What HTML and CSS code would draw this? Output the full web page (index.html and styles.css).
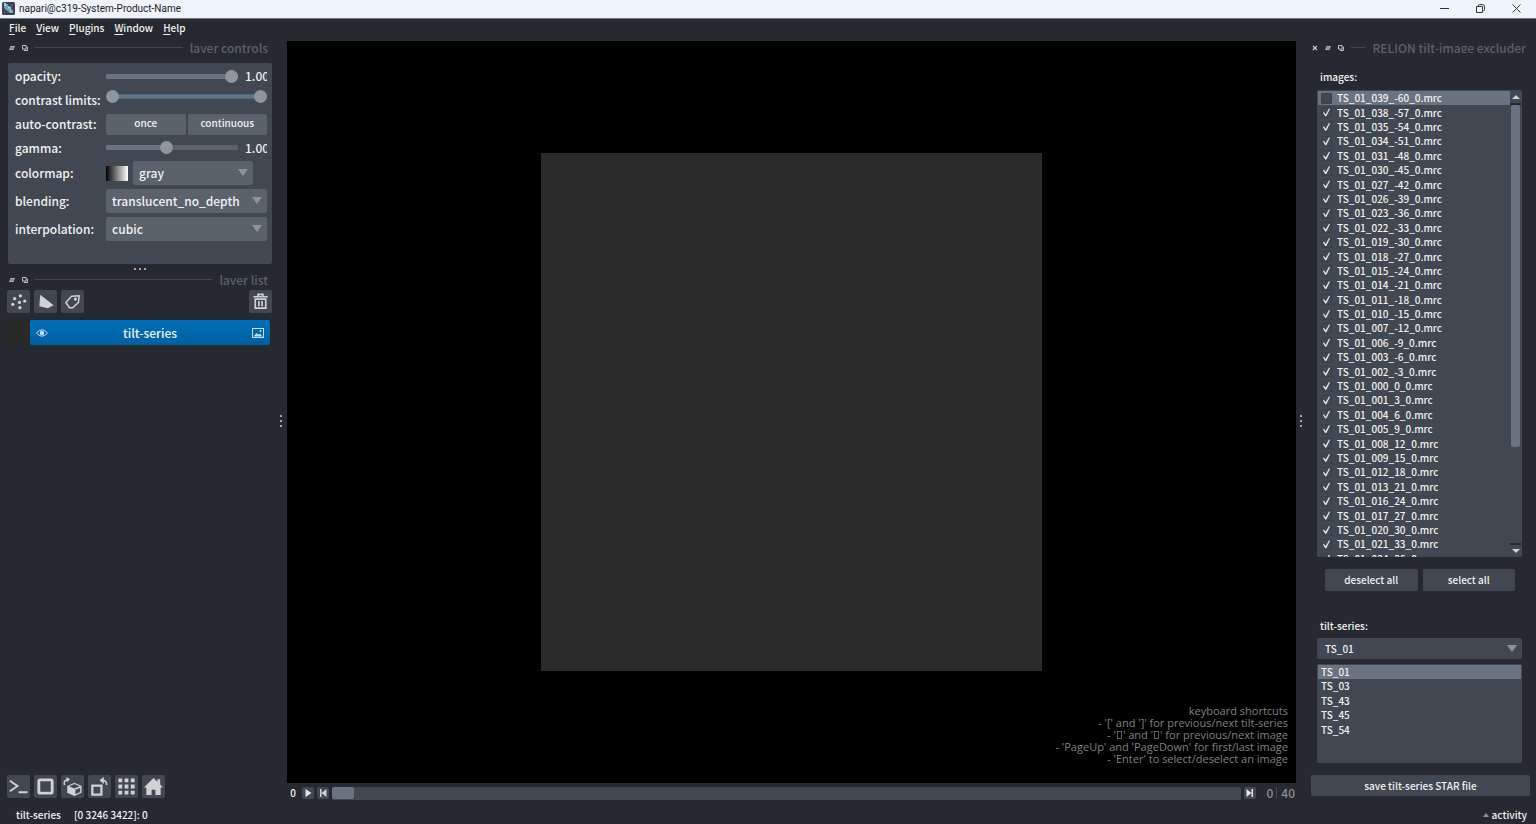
FILE: index.html
```html
<!DOCTYPE html>
<html lang="en">
<head>
<meta charset="utf-8">
<title>napari@c319-System-Product-Name</title>
<link rel="stylesheet" href="styles.css">
</head>
<body>
<svg class="defs" width="0" height="0" aria-hidden="true">
  <symbol id="hide" viewBox="0 0 6 6"><path d="M1.600 1H6L4.400 5H0z" fill="#a9acb0"/><path d="M2 3h2" stroke="#555" stroke-width="1"/></symbol>
  <symbol id="float" viewBox="0 0 6 6"><path d="M.5.5h3.600v3.600H.5z M4.800 2.100h.8v3.400H2.200v-.8" fill="none" stroke="#c3c5c8" stroke-width="1"/></symbol>
  <symbol id="close" viewBox="0 0 6 6"><path d="M.8.8l4.200 4.200M5 .8L.8 5" stroke="#d3d5d8" stroke-width="1.100"/></symbol>
</svg>
<header class="titlebar">
  <svg class="logo" viewBox="0 0 13 13"><rect width="13" height="13" rx="1.500" fill="#3f3f57"/><path d="M2 2h4v4l3 1 2 2v2H8L4 8 2 6z" fill="#6fa5ab"/><path d="M2 1h2v3H2zM6 4l3 1v3L6 6z" fill="#9fd6ce"/><path d="M7 2h4v4L8 4zM2 8l3 3H2z" fill="#54496c"/><circle cx="9" cy="9" r="1.500" fill="#8ab9c4"/></svg>
  <h1>napari@c319-System-Product-Name</h1>
  <button class="win" aria-label="Minimize"><svg width="9" height="9"><path d="M0 4.500h9" stroke="#333"/></svg></button>
  <button class="win" aria-label="Restore"><svg width="9" height="9"><path d="M.5 2.500h6v6h-6zM2.500 2V1.200Q2.500.5 3.500.5h3Q8.500.5 8.500 2.500v3Q8.500 6.500 7.500 6.500H7" fill="none" stroke="#333"/></svg></button>
  <button class="win" aria-label="Close"><svg width="9" height="9"><path d="M.5.5l8 8M8.500.5l-8 8" stroke="#333"/></svg></button>
</header>
<nav class="menu">
  <a href="#file"><u>F</u>ile</a><a href="#view"><u>V</u>iew</a><a href="#plugins"><u>P</u>lugins</a><a href="#window"><u>W</u>indow</a><a href="#help"><u>H</u>elp</a>
</nav>
<div class="workspace">
  <aside class="left">
    <div class="dock"><button aria-label="Hide"><svg><use href="#hide"/></svg></button><button aria-label="Float"><svg><use href="#float"/></svg></button><i></i><h2>layer controls</h2></div>
    <section class="controls">
      <label for="opacity">opacity:</label>
      <div class="field"><input class="slider full" id="opacity" type="range" min="0" max="100" value="100"><output>1.00</output></div>
      <label for="limits">contrast limits:</label>
      <div class="field double"><input class="slider" id="limits" type="range" value="0"><input class="slider" type="range" value="100" aria-label="upper contrast limit"></div>
      <span>auto-contrast:</span>
      <div class="field auto"><button>once</button><button>continuous</button></div>
      <label for="gamma">gamma:</label>
      <div class="field"><input class="slider mid" id="gamma" type="range" min="0" max="100" value="45"><output>1.00</output></div>
      <label for="cmap">colormap:</label>
      <div class="field"><span class="ramp"></span><span class="select narrow"><select id="cmap"><option>gray</option></select></span></div>
      <label for="blend">blending:</label>
      <div class="field"><span class="select"><select id="blend"><option>translucent_no_depth</option></select></span></div>
      <label for="interp">interpolation:</label>
      <div class="field"><span class="select"><select id="interp"><option>cubic</option></select></span></div>
    </section>
    <div class="grip across"><b></b><b></b><b></b></div>
    <div class="dock"><button aria-label="Hide"><svg><use href="#hide"/></svg></button><button aria-label="Float"><svg><use href="#float"/></svg></button><i></i><h2>layer list</h2></div>
    <div class="tools">
      <button aria-label="New points layer"><svg viewBox="0 0 22 22" fill="#d1d2d4"><circle cx="13" cy="5" r="1.700"/><circle cx="7" cy="8" r="1.700"/><circle cx="17.500" cy="10.500" r="1.700"/><circle cx="12" cy="12" r="1.700"/><circle cx="5" cy="14" r="1.700"/><circle cx="12.500" cy="17.500" r="1.700"/></svg></button>
      <button aria-label="New shapes layer"><svg viewBox="0 0 22 22" fill="#d1d2d4"><path d="M5.500 4l14 11-6 3L4.500 16z"/></svg></button>
      <button aria-label="New labels layer"><svg viewBox="0 0 22 22" fill="none" stroke="#d1d2d4" stroke-width="1.600"><path d="M4 12l6-6.500 8-.5-.8 7-6 5.500H8z" stroke-linejoin="round"/><circle cx="14" cy="8.500" r=".8" fill="#d1d2d4"/></svg></button>
      <button class="trash" aria-label="Delete layer"><svg viewBox="0 0 22 22" fill="none" stroke="#d1d2d4" stroke-width="1.700"><path d="M3.500 6h15M8.500 5.500V3.500h5v2M5.500 8.500h11v9.500h-11zM9.300 10.500v5.500M12.700 10.500v5.500"/></svg></button>
    </div>
    <div class="layer"><span class="thumb"></span>
      <div class="layername"><svg width="12" height="10" viewBox="0 0 12 10"><path d="M.5 5Q6-1.500 11.500 5 6 11.500.5 5z" fill="none" stroke="#c5dced"/><circle cx="6" cy="5" r="2.300" fill="#c5dced"/></svg><span>tilt-series</span><svg width="12" height="10" viewBox="0 0 12 10"><rect x=".5" y=".5" width="11" height="9" fill="none" stroke="#c5dced"/><path d="M1.500 8.500l3-3.500 2 1.500 1.500-1 2.500 3z" fill="#c5dced"/><circle cx="8.500" cy="3" r="1" fill="#c5dced"/></svg></div>
    </div>
    <div class="tools viewer">
      <button aria-label="Console"><svg viewBox="0 0 22 22" fill="none" stroke="#d1d2d4" stroke-width="2"><path d="M2 5l8 5.500L2 16M11 17h9.500"/></svg></button>
      <button aria-label="2D view"><svg viewBox="0 0 22 22" fill="none" stroke="#d1d2d4" stroke-width="3"><rect x="4" y="4" width="14" height="14" rx="1.500"/></svg></button>
      <button aria-label="Roll dimensions"><svg viewBox="0 0 22 22"><path d="M5.500 10.500l7.500-3.500 7.500 3.500v7L13 21l-7.500-3.500z" fill="#d1d2d4"/><path d="M7.500 10.800l5.500 2.200 5.500-2.200L13 8.500z" fill="#414851"/><path d="M14 14.500l5-2v4.300l-5 2.200z" fill="#414851"/><path d="M2.500 9.500Q1.500 4.500 5.500 3.800" fill="none" stroke="#d1d2d4" stroke-width="1.600"/><path d="M4.500 1l4 2.500-3.500 3z" fill="#d1d2d4"/></svg></button>
      <button aria-label="Transpose"><svg viewBox="0 0 22 22" fill="none" stroke="#d1d2d4" stroke-width="2.400"><path d="M3.500 10h9.500v9.500H3.500z"/><path d="M14 4.500q4.500 0 4.500 5" stroke-width="1.700"/><path d="M15.500 1v7.500L11 4.500z" fill="#d1d2d4" stroke="none"/></svg></button>
      <button aria-label="Grid mode"><svg viewBox="0 0 22 22" fill="#d1d2d4"><path d="M2.500 2.500h4v4h-4zM9 2.500h4v4H9zM15.500 2.500h4v4h-4zM2.500 9h4v4h-4zM9 9h4v4H9zM15.500 9h4v4h-4zM2.500 15.500h4v4h-4zM9 15.500h4v4H9zM15.500 15.500h4v4h-4z"/></svg></button>
      <button aria-label="Home"><svg viewBox="0 0 22 22" fill="#d1d2d4"><path d="M11 2l4 4V3.500h3V9l3 3h-2.500v8H13v-5.500H9V20H3.500v-8H1z"/></svg></button>
    </div>
  </aside>
  <div class="grip down"><b></b><b></b><b></b></div>
  <main>
    <div class="canvas"><div class="image"></div>
      <p class="shortcuts">keyboard shortcuts<br>- '[' and ']' for previous/next tilt-series<br>- '<span class="key"></span>' and '<span class="key"></span>' for previous/next image<br>- 'PageUp' and 'PageDown' for first/last image<br>- 'Enter' to select/deselect an image</p>
    </div>
    <div class="dims"><span class="axis">0</span><button aria-label="Play"><svg viewBox="0 0 12 12"><path d="M3.500 2l6 4-6 4z" fill="#e4e5e7"/></svg></button><button aria-label="First"><svg viewBox="0 0 12 12"><path d="M3 2v8h1.500V2zM9.500 2v8L4.500 6z" fill="#d1d2d4"/></svg></button><input type="range" min="0" max="40" value="0" aria-label="Tilt image index"><button aria-label="Last"><svg viewBox="0 0 12 12"><path d="M9 2v8H7.500V2zM2.500 2v8l5-4z" fill="#e4e5e7"/></svg></button><span class="pos">0</span><span class="total">40</span></div>
  </main>
  <div class="grip down end"><b></b><b></b><b></b></div>
  <aside class="right">
    <div class="dock"><button aria-label="Close"><svg><use href="#close"/></svg></button><button aria-label="Hide"><svg><use href="#hide"/></svg></button><button aria-label="Float"><svg><use href="#float"/></svg></button><i></i><h2>RELION tilt-image excluder</h2></div>
    <h3>images:</h3>
    <div class="files">
      <ul>
        <li class="on"><label><input type="checkbox">TS_01_039_-60_0.mrc</label></li>
        <li><label><input type="checkbox" checked>TS_01_038_-57_0.mrc</label></li>
        <li><label><input type="checkbox" checked>TS_01_035_-54_0.mrc</label></li>
        <li><label><input type="checkbox" checked>TS_01_034_-51_0.mrc</label></li>
        <li><label><input type="checkbox" checked>TS_01_031_-48_0.mrc</label></li>
        <li><label><input type="checkbox" checked>TS_01_030_-45_0.mrc</label></li>
        <li><label><input type="checkbox" checked>TS_01_027_-42_0.mrc</label></li>
        <li><label><input type="checkbox" checked>TS_01_026_-39_0.mrc</label></li>
        <li><label><input type="checkbox" checked>TS_01_023_-36_0.mrc</label></li>
        <li><label><input type="checkbox" checked>TS_01_022_-33_0.mrc</label></li>
        <li><label><input type="checkbox" checked>TS_01_019_-30_0.mrc</label></li>
        <li><label><input type="checkbox" checked>TS_01_018_-27_0.mrc</label></li>
        <li><label><input type="checkbox" checked>TS_01_015_-24_0.mrc</label></li>
        <li><label><input type="checkbox" checked>TS_01_014_-21_0.mrc</label></li>
        <li><label><input type="checkbox" checked>TS_01_011_-18_0.mrc</label></li>
        <li><label><input type="checkbox" checked>TS_01_010_-15_0.mrc</label></li>
        <li><label><input type="checkbox" checked>TS_01_007_-12_0.mrc</label></li>
        <li><label><input type="checkbox" checked>TS_01_006_-9_0.mrc</label></li>
        <li><label><input type="checkbox" checked>TS_01_003_-6_0.mrc</label></li>
        <li><label><input type="checkbox" checked>TS_01_002_-3_0.mrc</label></li>
        <li><label><input type="checkbox" checked>TS_01_000_0_0.mrc</label></li>
        <li><label><input type="checkbox" checked>TS_01_001_3_0.mrc</label></li>
        <li><label><input type="checkbox" checked>TS_01_004_6_0.mrc</label></li>
        <li><label><input type="checkbox" checked>TS_01_005_9_0.mrc</label></li>
        <li><label><input type="checkbox" checked>TS_01_008_12_0.mrc</label></li>
        <li><label><input type="checkbox" checked>TS_01_009_15_0.mrc</label></li>
        <li><label><input type="checkbox" checked>TS_01_012_18_0.mrc</label></li>
        <li><label><input type="checkbox" checked>TS_01_013_21_0.mrc</label></li>
        <li><label><input type="checkbox" checked>TS_01_016_24_0.mrc</label></li>
        <li><label><input type="checkbox" checked>TS_01_017_27_0.mrc</label></li>
        <li><label><input type="checkbox" checked>TS_01_020_30_0.mrc</label></li>
        <li><label><input type="checkbox" checked>TS_01_021_33_0.mrc</label></li>
        <li><label><input type="checkbox" checked>TS_01_024_36_0.mrc</label></li>
      </ul>
      <div class="scroll"><button class="up" aria-label="Scroll up"></button><div class="rail"><div class="thumbbar"></div></div><button class="dn" aria-label="Scroll down"></button></div>
    </div>
    <div class="pair"><button>deselect all</button><button>select all</button></div>
    <h3><label for="series">tilt-series:</label></h3>
    <span class="select series"><select id="series"><option>TS_01</option></select></span>
    <ul class="serieslist"><li class="on">TS_01</li><li>TS_03</li><li>TS_43</li><li>TS_45</li><li>TS_54</li></ul>
    <button class="save">save tilt-series STAR file</button>
  </aside>
</div>
<footer><span>tilt-series</span><span>[0 3246 3422]: 0</span><button class="activity"><svg width="6" height="4"><path d="M0 4l3-4 3 4z" fill="#8d9196"/></svg>activity</button></footer>
</body>
</html>
```
FILE: styles.css
```css
* { box-sizing: border-box; }
body {
  margin: 0; height: 100vh; display: flex; flex-direction: column; overflow: hidden;
  background: #262930; color: #f0f1f2;
  font: 500 10px/14px "Noto Sans CJK SC", "Noto Sans", sans-serif;
}
.defs { position: absolute; }
button, select, input { font: inherit; color: inherit; margin: 0; border: 0; padding: 0; border-radius: 2px; }
button { background: #414851; display: flex; align-items: center; justify-content: center; }
h1, h2, h3, p, ul { margin: 0; padding: 0; font-size: inherit; font-weight: inherit; }
ul { list-style: none; }

.titlebar { display: flex; align-items: center; height: 19px; padding: 0 2px 2px; background: #eff4fa; border-bottom: 1px solid #777b84; color: #222; }
.titlebar h1 { flex: 1; font: 10px/14px Roboto, sans-serif; padding: 2px 0 0 4px; }
.logo { width: 13px; height: 13px; }
.win { width: 36px; height: 16px; background: none; }

.menu { display: flex; align-items: center; gap: 10px; height: 22px; padding: 0 9px 4px; }
.menu a { color: inherit; text-decoration: none; }
.menu u { text-underline-offset: 2px; }

.workspace { flex: 1; min-height: 0; display: flex; }
.left { width: 272px; padding-left: 7px; display: flex; flex-direction: column; }
.dock { display: flex; align-items: center; height: 13px; gap: 7px; padding: 0 4px 0 2px; }
.dock button { width: 6px; height: 6px; background: none; }
.dock button svg { width: 6px; height: 6px; }
.dock i { flex: 1; height: 1px; background: #414851; }
.dock h2 { align-self: flex-start; font-size: 12px; line-height: 14px; height: 12px; overflow: hidden; color: #5a626c; }

.controls {
  margin: 9px 0 0 1px; padding: 1px 5px 21px 7px; background: #414851; border-radius: 2px;
  display: grid; grid-template-columns: 91px 1fr; grid-template-rows: 24px 24px 24px 23px 28px 28px 28px;
  align-items: center; font-size: 12px; line-height: 18px;
}
.field { display: flex; align-items: center; gap: 7px; height: 100%; min-width: 0; }
.field output { width: 22px; overflow: hidden; }
.slider { appearance: none; flex: 1; min-width: 0; height: 13px; background: linear-gradient(#6a7380, #6a7380) center / 100% 5px no-repeat; }
.slider.mid { background: linear-gradient(90deg, #6a7380 45%, #5a626c 45%) center / 100% 5px no-repeat; }
.slider::-webkit-slider-thumb { appearance: none; width: 13px; height: 13px; border-radius: 50%; background: #8f969c; }
.double { display: grid; padding-bottom: 8px; }
.double .slider { grid-area: 1 / 1; background: linear-gradient(#3f6d8c 1px, #6a7380 1px 4px, #3f6d8c 4px) center / 94% 5px no-repeat; }
.double .slider + .slider { background: none; }
.auto { gap: 2px; }
.auto button { flex: 1; height: 21px; padding-bottom: 2px; background: #5a626c; font-size: 10px; }
.ramp { width: 22px; height: 15px; background: linear-gradient(90deg, #000, #fff); }
.ramp + .select { margin-left: -2px; }
.select { position: relative; flex: 1; height: 24px; }
.select.narrow { flex: none; width: 120px; }
.select select { appearance: none; width: 100%; height: 100%; padding: 0 6px; background: #5a626c; }
.select::after { content: ""; position: absolute; right: 5px; top: 8px; border: 5px solid transparent; border-top: 7px solid #909499; border-bottom: 0; }

.grip { display: flex; align-items: center; justify-content: center; gap: 3px; }
.grip b { width: 2px; height: 2px; background: #d1d2d4; border-radius: 1px; }
.across { height: 9px; }
.down { flex-direction: column; width: 15px; padding: 0 0 5px 2px; }
.down.end { padding: 0 5px 5px 0; }
.tools { display: flex; gap: 4px; margin-top: 4px; }
.tools button { width: 23px; height: 23px; }
.tools svg { width: 21px; height: 21px; }
.trash { margin-left: auto; }
.layer { display: flex; height: 25px; margin: 7px 2px 0 1px; }
.thumb { width: 22px; background: #292928; }
.layername { flex: 1; display: flex; align-items: center; padding: 0 6px; border-radius: 2px; background: linear-gradient(#0070b9, #005f9e); font-size: 12px; }
.layername span { flex: 1; text-align: center; }
.viewer { margin: auto 0 8px; }

main { flex: 1; min-width: 0; display: flex; flex-direction: column; }
.canvas { position: relative; flex: 1; min-height: 0; background: #000; display: flex; align-items: center; justify-content: center; }
.image { height: 69.8%; aspect-ratio: 502 / 518; background: #2a2a2a; }
.shortcuts { position: absolute; right: 8px; bottom: 18px; font: 11px/12px "Open Sans", sans-serif; color: #808080; text-align: right; }
.key { display: inline-block; width: 5px; height: 8px; margin: 0 1px; border: 1px solid #606060; }
.dims { display: flex; align-items: center; height: 23px; padding: 0 1px 3px 0; gap: 3px; }
.axis { width: 12px; text-align: center; }
.dims button { width: 12px; height: 12px; }
.dims svg { width: 12px; height: 12px; }
.dims input { appearance: none; flex: 1; min-width: 0; height: 13px; background: #414851; }
.dims input::-webkit-slider-thumb { appearance: none; width: 22px; height: 12px; border-radius: 2px; background: #6a7380; }
.pos, .total { font-size: 12px; color: #8f9296; text-align: right; }
.pos { width: 14px; }
.total { padding-left: 4px; border-left: 1px solid #414851; line-height: 12px; }

.right { width: 225px; display: flex; flex-direction: column; }
.right .dock { padding: 0 10px 0 1px; }
.right h3 { padding-left: 9px; }
.right .dock + h3 { margin-top: 16px; }
.files { display: flex; flex: 1; min-height: 0; margin: 6px 14px 0 6px; padding: 1px 1px 0; background: #414851; border-radius: 2px; overflow: hidden; }
.files ul { flex: 1; display: grid; grid-auto-rows: 1fr; height: 475px; }
.files label { display: flex; align-items: center; height: 100%; gap: 5px; padding-left: 3px; }
.files input { appearance: none; width: 11px; height: 11px; background: #414851; border: 1px solid #3a4048; border-radius: 1px; }
.files input:checked::before { content: ""; display: block; width: 9px; height: 9px; background: #e4e5e7; clip-path: polygon(10% 50%, 24% 46%, 40% 70%, 78% 5%, 90% 8%, 48% 92%, 36% 92%); }
.on { background: #6a7380; }
.scroll { width: 11px; display: flex; flex-direction: column; }
.scroll button { height: 12px; width: 11px; }
.up::before, .dn::before { content: ""; border: 4px solid transparent; }
.up::before { border-top: 0; border-bottom: 4px solid #d1d2d4; }
.dn::before { border-bottom: 0; border-top: 4px solid #d1d2d4; }
.rail { flex: 1; border: solid #262930; border-width: 2px 0; padding: 0 1px; }
.thumbbar { height: 78%; background: #6a7380; border-radius: 2px; }
.pair { display: flex; gap: 5px; margin: 12px 21px 28px 14px; }
.pair button { flex: 1; height: 22px; }
.series { flex: none; height: 21px; margin: 5px 14px 0 6px; }
.select.series select { background: #414851; padding: 0 8px; }
.select.series::after { top: 7px; }
.serieslist { display: grid; grid-template-rows: repeat(5, 1fr); height: 99px; margin: 5px 14px 12px 6px; padding: 1px 1px 26px; background: #414851; border-radius: 2px; }
.serieslist li { padding-left: 3px; }
.save { height: 21px; margin: 0 6px 10px 0; }

footer { display: flex; align-items: center; height: 18px; gap: 13px; padding: 0 9px 0 16px; }
.activity { margin-left: auto; background: none; gap: 3px; }
```
